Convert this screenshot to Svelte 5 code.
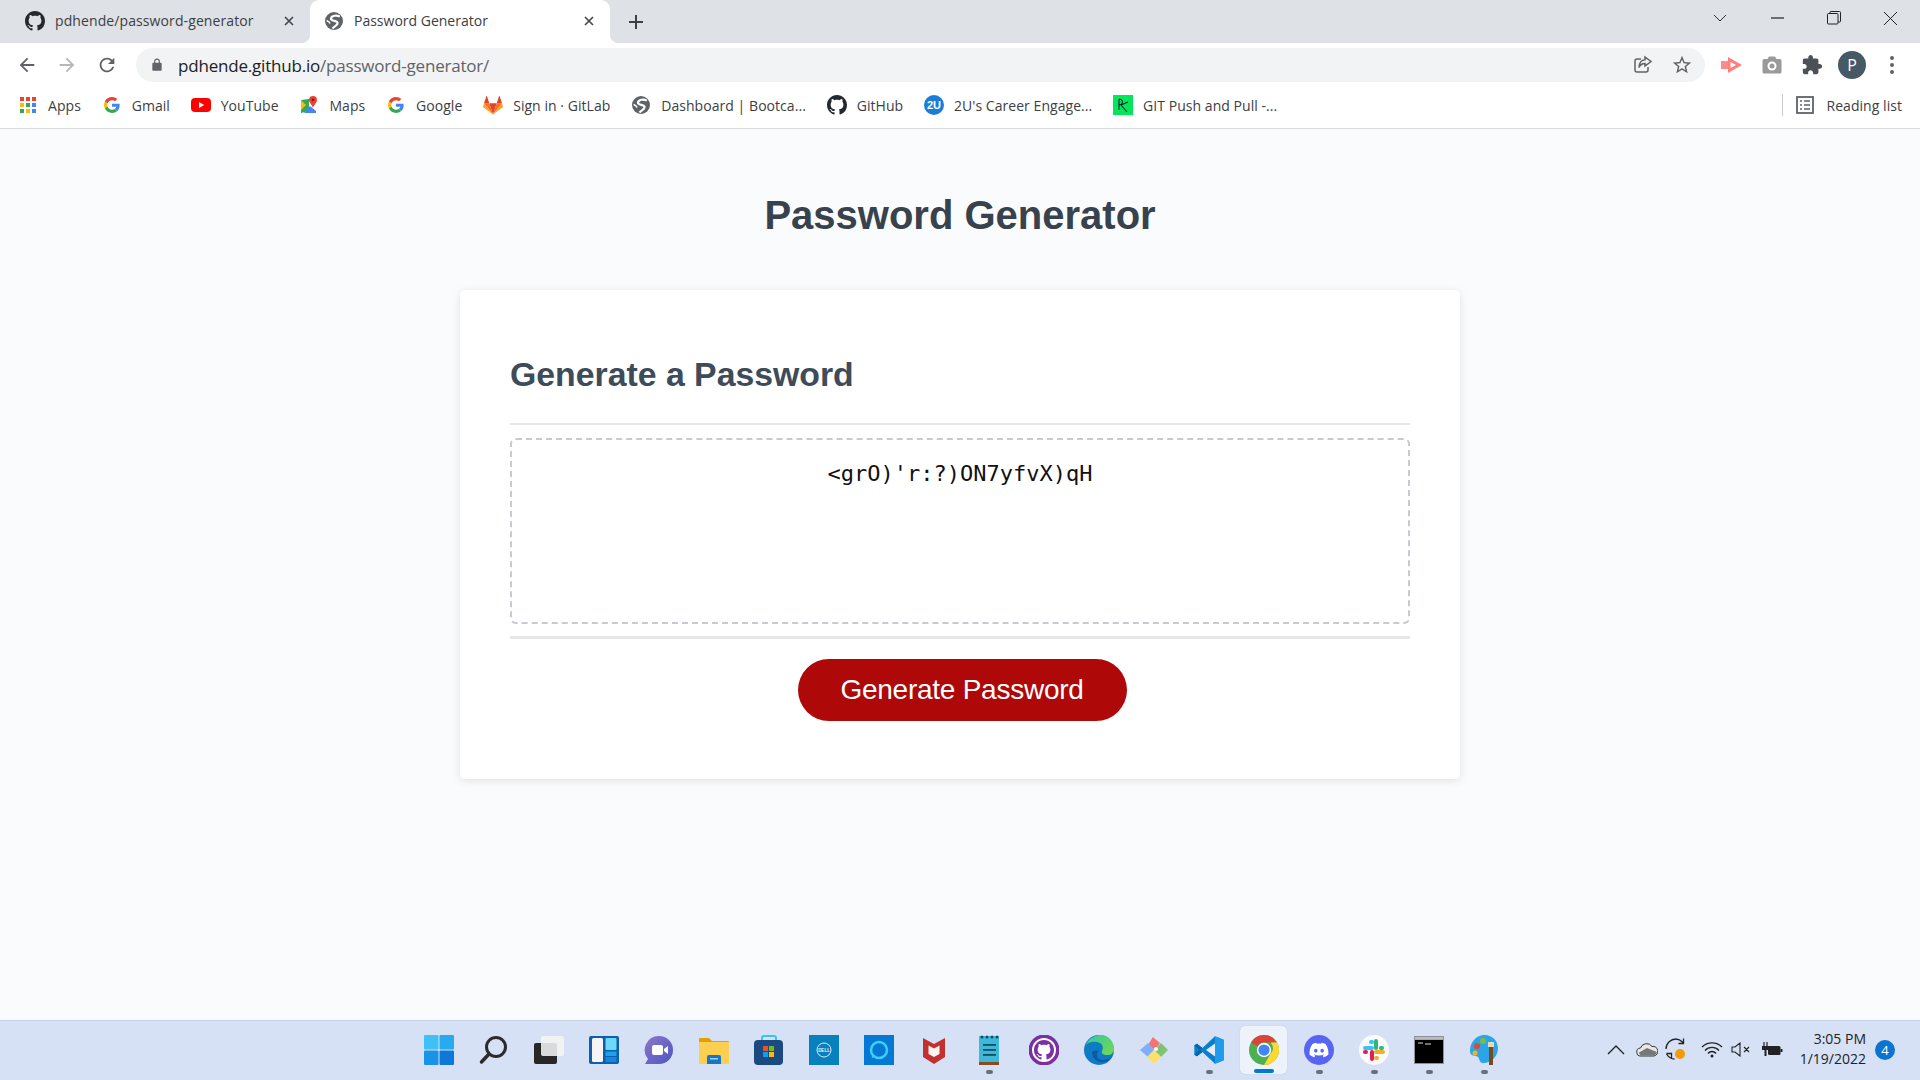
<script>
  const bookmarks = [
    { icon: 'apps', label: 'Apps' },
    { icon: 'google', label: 'Gmail' },
    { icon: 'youtube', label: 'YouTube' },
    { icon: 'maps', label: 'Maps' },
    { icon: 'google', label: 'Google' },
    { icon: 'gitlab', label: 'Sign in · GitLab' },
    { icon: 'globe', label: 'Dashboard | Bootca...' },
    { icon: 'github', label: 'GitHub' },
    { icon: 'twou', label: "2U's Career Engage..." },
    { icon: 'dk', label: 'GIT Push and Pull -...' }
  ];
  const appColors = ['#ea4335','#ea4335','#ea4335','#fbbc05','#34a853','#4285f4','#34a853','#fbbc05','#4285f4'];
  const taskIcons = [
    { id: 'win' }, { id: 'search' }, { id: 'desktops' }, { id: 'widgets' }, { id: 'chat' },
    { id: 'folder' }, { id: 'store' }, { id: 'dell' }, { id: 'alexa' }, { id: 'mcafee' },
    { id: 'notes', dot: true }, { id: 'ghd' }, { id: 'edge' }, { id: 'git' },
    { id: 'vscode', dot: true }, { id: 'chrome', active: true }, { id: 'discord', dot: true },
    { id: 'slack', dot: true }, { id: 'term', dot: true }, { id: 'paint', dot: true }
  ];
</script>

{#snippet github(size)}
  <svg width={size} height={size} viewBox="0 0 16 16"><path fill="#24292f" d="M8 0C3.58 0 0 3.58 0 8c0 3.54 2.29 6.53 5.47 7.59.4.07.55-.17.55-.38 0-.19-.01-.82-.01-1.49-2.01.37-2.53-.49-2.69-.94-.09-.23-.48-.94-.82-1.13-.28-.15-.68-.52-.01-.53.63-.01 1.08.58 1.23.82.72 1.21 1.87.87 2.33.66.07-.52.28-.87.51-1.07-1.78-.2-3.64-.89-3.64-3.95 0-.87.31-1.59.82-2.15-.08-.2-.36-1.02.08-2.12 0 0 .67-.21 2.2.82.64-.18 1.32-.27 2-.27.68 0 1.36.09 2 .27 1.53-1.04 2.2-.82 2.2-.82.44 1.1.16 1.92.08 2.12.51.56.82 1.27.82 2.15 0 3.07-1.87 3.75-3.65 3.95.29.25.54.73.54 1.48 0 1.07-.01 1.93-.01 2.2 0 .21.15.46.55.38A8.013 8.013 0 0016 8c0-4.42-3.58-8-8-8z"/></svg>
{/snippet}

{#snippet globe()}
  <svg width="18" height="18" viewBox="0 0 18 18"><circle cx="9" cy="9" r="9" fill="#5f6368"/><path fill="none" stroke="#fff" stroke-width="2.200" d="M14.800 4.600C11.500 2.800 6.500 3.600 6 6.500 5.500 9.800 12.300 8 12.600 11 12.800 13.500 9.500 14.200 7.500 16.500"/><path fill="none" stroke="#fff" stroke-width="1.600" d="M1.600 8.500C3 9 4.500 10 5 11.500"/></svg>
{/snippet}

{#snippet googleG()}
  <svg width="16" height="16" viewBox="0 0 48 48"><path fill="#EA4335" d="M24 9.5c3.54 0 6.71 1.22 9.21 3.6l6.85-6.85C35.9 2.38 30.47 0 24 0 14.62 0 6.51 5.38 2.56 13.22l7.98 6.19C12.43 13.72 17.74 9.5 24 9.5z"/><path fill="#4285F4" d="M46.98 24.55c0-1.57-.15-3.09-.38-4.55H24v9.02h12.94c-.58 2.96-2.26 5.48-4.78 7.18l7.73 6c4.51-4.18 7.09-10.36 7.09-17.65z"/><path fill="#FBBC05" d="M10.53 28.59c-.48-1.45-.76-2.99-.76-4.59s.27-3.14.76-4.59l-7.98-6.19C.92 16.46 0 20.12 0 24c0 3.88.92 7.54 2.56 10.78l7.97-6.19z"/><path fill="#34A853" d="M24 48c6.48 0 11.93-2.13 15.89-5.81l-7.73-6c-2.15 1.45-4.92 2.3-8.16 2.3-6.26 0-11.57-4.22-13.47-9.91l-7.98 6.19C6.51 42.62 14.62 48 24 48z"/></svg>
{/snippet}

{#snippet bookmarkIcon(name)}
  {#if name === 'apps'}
    <span class="apps">{#each appColors as c}<i style="background:{c}"></i>{/each}</span>
  {:else if name === 'google'}
    {@render googleG()}
  {:else if name === 'youtube'}
    <svg width="20" height="16" viewBox="0 0 20 16"><rect y="1" width="20" height="14" rx="4" fill="#f00"/><path d="M8 5l5.2 3L8 11z" fill="#fff"/></svg>
  {:else if name === 'maps'}
    <svg width="18" height="18" viewBox="0 0 18 18"><path fill="#35a853" d="M1 4l8-1v12l-8 2z"/><path fill="#fbbc05" d="M1 4l5 5-5 5z"/><path fill="#4285f4" d="M4 17l6-7 6 5v2z"/><path fill="#e8eaed" d="M9 3l7 1v5l-5 0z"/><path fill="#ea4335" d="M13 0a4 4 0 014 4c0 2.8-3 4.5-4 8-1-3.5-4-5.200-4-8a4 4 0 014-4z"/><circle cx="13" cy="4" r="1.400" fill="#8e1a14"/></svg>
  {:else if name === 'gitlab'}
    <svg width="20" height="19" viewBox="0 0 20 19"><path fill="#e24329" d="M10 18.500l3.700-11.300H6.300z"/><path fill="#fc6d26" d="M10 18.500L6.300 7.200H1z"/><path fill="#fca326" d="M1 7.200L0 10.500c-.1.300 0 .6.300.8L10 18.500z"/><path fill="#e24329" d="M1 7.200h5.300L4 .3c-.1-.4-.6-.4-.7 0z"/><path fill="#fc6d26" d="M10 18.500l3.700-11.300H19z"/><path fill="#fca326" d="M19 7.200l1 3.300c.1.300 0 .6-.3.8L10 18.500z"/><path fill="#e24329" d="M19 7.200h-5.300L16 .3c.1-.4.6-.4.700 0z"/></svg>
  {:else if name === 'globe'}
    {@render globe()}
  {:else if name === 'github'}
    {@render github(20)}
  {:else if name === 'twou'}
    <svg width="20" height="20" viewBox="0 0 20 20"><circle cx="10" cy="10" r="10" fill="#1b7ed6"/><text x="10" y="14" text-anchor="middle" font-family="Liberation Sans" font-weight="700" font-size="11" fill="#fff">2U</text></svg>
  {:else if name === 'dk'}
    <svg width="20" height="20" viewBox="0 0 20 20"><rect width="20" height="20" fill="#05e75a"/><path d="M6 4v11M6 4c3 0 4 2 3 5l-3 1M8 10l7-3M8 10l6 7" stroke="#123" stroke-width="1.100" fill="none"/></svg>
  {/if}
{/snippet}

{#snippet taskIcon(id)}
  {#if id === 'win'}
    <svg width="30" height="30" viewBox="0 0 30 30"><rect x="0" y="0" width="14.500" height="14.500" rx="1" fill="#3fc1f5"/><rect x="15.500" y="0" width="14.500" height="14.500" rx="1" fill="#28aaee"/><rect x="0" y="15.500" width="14.500" height="14.500" rx="1" fill="#1a93e6"/><rect x="15.500" y="15.500" width="14.500" height="14.500" rx="1" fill="#0e78d8"/></svg>
  {:else if id === 'search'}
    <svg width="30" height="30" viewBox="0 0 30 30"><circle cx="17" cy="12" r="9.500" fill="none" stroke="#2b2b2b" stroke-width="3"/><path d="M10 19l-7.500 8" stroke="#2b2b2b" stroke-width="3.500" stroke-linecap="round"/></svg>
  {:else if id === 'desktops'}
    <svg width="30" height="30" viewBox="0 0 30 30"><rect x="0" y="8" width="23" height="21" rx="2" fill="#272727"/><rect x="7" y="1" width="23" height="20" rx="2" fill="#f4f4f4" opacity=".88"/></svg>
  {:else if id === 'widgets'}
    <svg width="30" height="30" viewBox="0 0 30 30"><rect width="30" height="28" y="1" rx="2" fill="#0f5fa8"/><rect x="3" y="3" width="11" height="24" rx="1.500" fill="#f5f5f5"/><rect x="16.500" y="3" width="11" height="12" rx="1" fill="#6cd8fa"/><rect x="16.500" y="16.500" width="11" height="4.500" fill="#1fa0ee"/><rect x="16.500" y="22" width="11" height="5" fill="#1287e0"/></svg>
  {:else if id === 'chat'}
    <svg width="30" height="30" viewBox="0 0 30 30"><defs><linearGradient id="c1" x1="0" y1="0" x2="1" y2="1"><stop offset="0" stop-color="#8d78c8"/><stop offset="1" stop-color="#4c55c4"/></linearGradient></defs><path d="M15 1a14 14 0 110 28H1l3-5A14 14 0 0115 1z" fill="url(#c1)"/><rect x="8" y="10" width="11" height="10" rx="2" fill="#fff"/><path d="M20 14l4-3v8l-4-3z" fill="#fff"/></svg>
  {:else if id === 'folder'}
    <svg width="30" height="28" viewBox="0 0 30 28"><path d="M0 3a1 1 0 011-1h9l3 3h16a1 1 0 011 1v4H0z" fill="#e0a200"/><path d="M0 6h30v21a1 1 0 01-1 1H1a1 1 0 01-1-1z" fill="#fdcf50"/><path d="M8 28v-7a2 2 0 012-2h10a2 2 0 012 2v7z" fill="#1476c4"/><rect x="11" y="22" width="8" height="1.500" fill="#9fd2f3"/></svg>
  {:else if id === 'store'}
    <svg width="30" height="30" viewBox="0 0 30 30"><path d="M8 7V3a2 2 0 012-2h10a2 2 0 012 2v4" fill="none" stroke="#38c3f2" stroke-width="2"/><rect y="5" width="29" height="25" rx="4" fill="#1a4a80"/><rect x="9" y="11" width="5" height="5" fill="#f25022"/><rect x="15" y="11" width="5" height="5" fill="#7fba00"/><rect x="9" y="17" width="5" height="5" fill="#00a4ef"/><rect x="15" y="17" width="5" height="5" fill="#ffb900"/></svg>
  {:else if id === 'dell'}
    <svg width="30" height="30" viewBox="0 0 30 30"><rect width="30" height="30" fill="#0880bd"/><circle cx="15" cy="15" r="7" fill="none" stroke="#d8eef8" stroke-width="1"/><text x="15" y="17" text-anchor="middle" font-size="4.500" font-weight="700" font-family="Liberation Sans" fill="#e8f5fb">DELL</text></svg>
  {:else if id === 'alexa'}
    <svg width="30" height="30" viewBox="0 0 30 30"><rect width="30" height="30" fill="#0578d6"/><circle cx="15" cy="15" r="8" fill="none" stroke="#3fd0f5" stroke-width="2.500"/><path d="M9 19l-1.500 4 4.500-1.500z" fill="#3fd0f5"/></svg>
  {:else if id === 'mcafee'}
    <svg width="30" height="30" viewBox="0 0 30 30"><path d="M4 3l11 6 11-6v19l-11 7-11-7z" fill="#c4302f"/><path d="M9.500 10.500l5.500 3 5.500-3v8.500L15 22l-5.500-3z" fill="#fbf4f2"/></svg>
  {:else if id === 'notes'}
    <svg width="24" height="32" viewBox="0 0 24 32"><rect x="2" y="2" width="20" height="27" fill="#3db8d8"/><rect x="2" y="28" width="20" height="3" fill="#8a4b24"/><g fill="#114e66"><circle cx="5" cy="3" r="1.500"/><circle cx="10" cy="3" r="1.500"/><circle cx="15" cy="3" r="1.500"/><circle cx="20" cy="3" r="1.500"/><rect x="6" y="10" width="13" height="1.800"/><rect x="6" y="15" width="13" height="1.800"/><rect x="6" y="20" width="13" height="1.800"/></g></svg>
  {:else if id === 'ghd'}
    <svg width="30" height="30" viewBox="-4 -4 24 24"><circle cx="8" cy="8" r="11" fill="#fff" stroke="#7b2fa0" stroke-width="2.800"/><path fill="#7b2fa0" d="M8 0C3.58 0 0 3.58 0 8c0 3.54 2.29 6.53 5.470 7.590.4.070.55-.17.55-.38 0-.19-.01-.82-.01-1.490-2.010.37-2.530-.49-2.690-.94-.09-.23-.48-.94-.82-1.130-.28-.15-.68-.52-.01-.53.63-.01 1.080.58 1.230.82.720 1.210 1.870.87 2.330.66.070-.52.280-.87.510-1.070-1.780-.2-3.640-.89-3.640-3.950 0-.87.310-1.590.820-2.150-.08-.2-.36-1.020.080-2.120 0 0 .67-.21 2.200.82.640-.18 1.320-.27 2-.27.680 0 1.360.09 2 .27 1.530-1.040 2.200-.82 2.200-.82.44 1.100.16 1.920.08 2.120.51.56.82 1.270.82 2.150 0 3.070-1.870 3.750-3.650 3.950.29.25.54.73.54 1.480 0 1.070-.01 1.930-.01 2.200 0 .21.15.46.55.38A8.013 8.013 0 0016 8c0-4.420-3.580-8-8-8z"/></svg>
  {:else if id === 'edge'}
    <svg width="30" height="30" viewBox="0 0 30 30"><defs><linearGradient id="e1" x1="0" y1="0" x2="1" y2="1"><stop offset="0" stop-color="#36c9a0"/><stop offset="1" stop-color="#74d94f"/></linearGradient></defs><circle cx="15" cy="15" r="15" fill="#0f7bc4"/><path d="M2 10C5 2 13 0 17 0c7 0 13 6 13 14 0 5-4 6-7 6-4 0-6-2-5-4 1-2 2-5-2-8-4-2-11-2-14 2z" fill="url(#e1)"/><path d="M8 17c0 7 6 11 12 10 3 0 6-2 8-5-3 2-6 3-9 3-4 0-6-2-6-5 0-2 1-3 2-4-3-1-7 0-7 1z" fill="#0c5aa6"/></svg>
  {:else if id === 'git'}
    <svg width="30" height="30" viewBox="0 0 30 30"><path d="M15 2l6 7-6 6-6-6z" fill="#f27474" transform="rotate(-10 15 9)"/><path d="M1 15l8-7 6 7-6 7z" fill="#80aefb"/><path d="M15 15l7-7 7 7-7 7z" fill="#7cc46e"/><path d="M8 22l7-7 7 7-7 7z" fill="#fbe16c"/><circle cx="17" cy="14" r="2" fill="#fff"/></svg>
  {:else if id === 'vscode'}
    <svg width="30" height="30" viewBox="0 0 100 100"><path d="M70 4L99 16v68L70 96 28 57 10 71 1 66V34l9-5 18 14z" fill="#0b7fcc"/><path d="M70 4L99 16v68L70 96z" fill="#1e9bea"/><path d="M70 28v44L40 50z" fill="#e3ecf9"/><path d="M1 34l9-5 18 14-9 8zM1 66l9 5 18-14-9-8z" fill="#0865a8"/></svg>
  {:else if id === 'chrome'}
    <svg width="30" height="30" viewBox="0 0 48 48"><circle cx="24" cy="24" r="24" fill="#4caf50"/><path d="M24 0a24 24 0 0120.800 12H24a12 12 0 00-10.400 6L3.200 12A24 24 0 0124 0z" fill="#db4437"/><path d="M44.800 12A24 24 0 0124 48l10.400-18a12 12 0 000-18z" fill="#fdd835"/><circle cx="24" cy="24" r="11.500" fill="#fff"/><circle cx="24" cy="24" r="9" fill="#4285f4"/></svg>
  {:else if id === 'discord'}
    <svg width="30" height="30" viewBox="0 0 30 30"><circle cx="15" cy="15" r="15" fill="#5865f2"/><path transform="translate(5.500 5.500) scale(.79)" fill="#fff" d="M20.317 4.37a19.791 19.791 0 0 0-4.885-1.515.074.074 0 0 0-.079.037c-.21.375-.444.864-.608 1.25a18.27 18.27 0 0 0-5.487 0 12.64 12.64 0 0 0-.617-1.25.077.077 0 0 0-.079-.037A19.736 19.736 0 0 0 3.677 4.37a.07.07 0 0 0-.032.027C.533 9.046-.32 13.58.099 18.057a.082.082 0 0 0 .031.057 19.9 19.9 0 0 0 5.993 3.03.078.078 0 0 0 .084-.028c.462-.63.874-1.295 1.226-1.994a.076.076 0 0 0-.041-.106 13.107 13.107 0 0 1-1.872-.892.077.077 0 0 1-.008-.128 10.2 10.2 0 0 0 .372-.292.074.074 0 0 1 .077-.01c3.928 1.793 8.18 1.793 12.062 0a.074.074 0 0 1 .078.01c.12.098.246.198.373.292a.077.077 0 0 1-.006.127 12.299 12.299 0 0 1-1.873.892.077.077 0 0 0-.041.107c.36.698.772 1.362 1.225 1.993a.076.076 0 0 0 .084.028 19.839 19.839 0 0 0 6.002-3.03.077.077 0 0 0 .032-.054c.5-5.177-.838-9.674-3.549-13.66a.061.061 0 0 0-.031-.03zM8.02 15.33c-1.183 0-2.157-1.085-2.157-2.419 0-1.333.956-2.419 2.157-2.419 1.21 0 2.176 1.096 2.157 2.42 0 1.333-.956 2.418-2.157 2.418zm7.975 0c-1.183 0-2.157-1.085-2.157-2.419 0-1.333.955-2.419 2.157-2.419 1.21 0 2.176 1.096 2.157 2.42 0 1.333-.946 2.418-2.157 2.418z"/></svg>
  {:else if id === 'slack'}
    <svg width="30" height="30" viewBox="0 0 30 30"><circle cx="15" cy="15" r="15" fill="#fbfbfb"/><g stroke-width="4" stroke-linecap="round"><path d="M17 6v7M17 13h.01" stroke="#2eb67d"/><path d="M22 13h1" stroke="#2eb67d"/><path d="M6 13h7" stroke="#36c5f0"/><path d="M12 7h1" stroke="#36c5f0"/><path d="M13 17v7" stroke="#e01e5a"/><path d="M6 17h1" stroke="#e01e5a"/><path d="M17 17h7" stroke="#ecb22e"/><path d="M17 23h1" stroke="#ecb22e"/></g></svg>
  {:else if id === 'term'}
    <svg width="30" height="28" viewBox="0 0 30 28"><rect width="30" height="28" fill="#8e9297"/><rect x="1" y="4" width="28" height="23" fill="#000"/><rect x="1" y="1" width="28" height="2.500" fill="#b9bcc0"/><path d="M4 7h5M11 8h6" stroke="#ddd" stroke-width="1"/></svg>
  {:else if id === 'paint'}
    <svg width="30" height="32" viewBox="0 0 30 32"><path d="M14 1c9-1 15 6 15 13s-5 14-13 15c-6 1-5-4-7-6s-8 0-8-6C1 9 6 2 14 1z" fill="#2aa6e8"/><circle cx="8" cy="12" r="3" fill="#e5472d"/><circle cx="14" cy="7" r="3" fill="#7abf3a"/><circle cx="6" cy="19" r="2.500" fill="#f4b429"/><rect x="20" y="12" width="4" height="19" fill="#7a4a1f"/><rect x="19" y="8" width="6" height="5" fill="#e8d9b5"/></svg>
  {/if}
{/snippet}

<div class="screen">
  <header class="browser">
    <div class="tabstrip">
      <div class="tab">
        <span class="favicon">{@render github(20)}</span>
        <span class="tab-title">pdhende/password-generator</span>
        <svg class="tab-x" width="10" height="10" viewBox="0 0 10 10"><path d="M1 1l8 8M9 1l-8 8" stroke="#45494f" stroke-width="1.700"/></svg>
      </div>
      <div class="tab active">
        <span class="favicon">{@render globe()}</span>
        <span class="tab-title">Password Generator</span>
        <svg class="tab-x" width="10" height="10" viewBox="0 0 10 10"><path d="M1 1l8 8M9 1l-8 8" stroke="#45494f" stroke-width="1.700"/></svg>
      </div>
      <svg class="plus" width="14" height="14" viewBox="0 0 14 14"><path d="M7 0v14M0 7h14" stroke="#3c4043" stroke-width="2"/></svg>
      <div class="winctl">
        <svg class="chev" width="14" height="8" viewBox="0 0 14 8"><path d="M1 1l6 6 6-6" fill="none" stroke="#333" stroke-width="1"/></svg>
        <svg width="14" height="2" viewBox="0 0 14 2"><path d="M0 1h13" stroke="#222" stroke-width="1.200"/></svg>
        <svg width="14" height="14" viewBox="0 0 14 14"><rect x=".5" y="2.500" width="10.500" height="10.500" rx="1" fill="none" stroke="#222"/><path d="M3 2.500V1.500a1 1 0 011-1h8.500a1 1 0 011 1V10a1 1 0 01-1 1H11" fill="none" stroke="#222"/></svg>
        <svg width="15" height="15" viewBox="0 0 15 15"><path d="M1 1l13 13M14 1L1 14" stroke="#222" stroke-width="1"/></svg>
      </div>
    </div>

    <div class="toolbar">
      <svg class="nav" width="22" height="22" viewBox="0 0 24 24"><path fill="#5f6368" d="M20 11H7.830l5.590-5.590L12 4l-8 8 8 8 1.410-1.410L7.830 13H20v-2z"/></svg>
      <svg class="nav" width="22" height="22" viewBox="0 0 24 24"><path fill="#b4b7bb" d="M4 11h12.170l-5.590-5.590L12 4l8 8-8 8-1.410-1.410L16.170 13H4v-2z"/></svg>
      <svg class="nav" width="22" height="22" viewBox="0 0 24 24"><path fill="#5f6368" d="M17.650 6.350C16.200 4.900 14.210 4 12 4c-4.420 0-7.990 3.580-7.990 8s3.570 8 7.990 8c3.730 0 6.840-2.550 7.730-6h-2.080c-.82 2.330-3.040 4-5.650 4-3.310 0-6-2.690-6-6s2.690-6 6-6c1.660 0 3.140.69 4.220 1.780L13 11h7V4l-2.350 2.350z"/></svg>
      <div class="omnibox">
        <svg width="14" height="14" viewBox="0 0 24 24"><path fill="#5f6368" d="M18 8h-1V6c0-2.760-2.240-5-5-5S7 3.240 7 6v2H6c-1.100 0-2 .9-2 2v10c0 1.100.9 2 2 2h12c1.100 0 2-.9 2-2V10c0-1.100-.9-2-2-2zM9 8V6c0-1.660 1.340-3 3-3s3 1.340 3 3v2H9z"/></svg>
        <span class="url"><b>pdhende.github.io</b>/password-generator/</span>
        <span class="omni-actions">
          <svg width="20" height="20" viewBox="0 0 20 20" fill="none" stroke="#5f6368" stroke-width="1.500"><path d="M8 4H4a2 2 0 00-2 2v9a2 2 0 002 2h9a2 2 0 002-2v-3"/><path d="M12 2l6 4.500-6 4.500V8.500C9 8.500 7 10 6 12.500 6 8 8.500 5 12 4.700z"/></svg>
          <svg width="22" height="22" viewBox="0 0 24 24"><path fill="#5f6368" d="M22 9.240l-7.190-.62L12 2 9.190 8.630 2 9.240l5.460 4.730L5.820 21 12 17.270 18.180 21l-1.630-7.030L22 9.240zM12 15.400l-3.760 2.270 1-4.280-3.320-2.880 4.380-.38L12 6.100l1.710 4.040 4.380.38-3.320 2.880 1 4.280L12 15.400z"/></svg>
        </span>
      </div>
      <div class="tools">
        <svg width="24" height="18" viewBox="0 0 24 18"><rect x="1" y="5" width="7" height="8" fill="#ff8a8a"/><path d="M8 1l14 8-14 8z" fill="#ff7f7f"/><path d="M10.500 6l5.500 3-5.500 3z" fill="#fff"/></svg>
        <svg width="20" height="18" viewBox="0 0 20 18"><path d="M2 3h3.500l1.500-2.500h6L14.500 3H18a1.500 1.500 0 011.500 1.500V16a1.500 1.500 0 01-1.500 1.500H2A1.500 1.500 0 01.5 16V4.500A1.500 1.500 0 012 3z" fill="#9a9a9a"/><circle cx="10" cy="10" r="4.500" fill="#fff"/><circle cx="10" cy="10" r="2.500" fill="#9a9a9a"/></svg>
        <svg width="22" height="22" viewBox="0 0 24 24"><path fill="#4b5156" d="M20.500 11H19V7c0-1.100-.9-2-2-2h-4V3.500C13 2.120 11.880 1 10.500 1S8 2.120 8 3.500V5H4c-1.100 0-1.990.9-1.990 2v3.800H3.500c1.490 0 2.700 1.210 2.700 2.700s-1.210 2.700-2.700 2.700H2V20c0 1.100.9 2 2 2h3.800v-1.500c0-1.490 1.210-2.700 2.700-2.700 1.490 0 2.700 1.210 2.700 2.700V22H17c1.100 0 2-.9 2-2v-4h1.500c1.380 0 2.500-1.120 2.500-2.500S21.880 11 20.500 11z"/></svg>
        <span class="avatar">P</span>
        <svg width="6" height="20" viewBox="0 0 6 20"><g fill="#5f6368"><circle cx="3" cy="3" r="2"/><circle cx="3" cy="10" r="2"/><circle cx="3" cy="17" r="2"/></g></svg>
      </div>
    </div>

    <nav class="bookmarks">
      {#each bookmarks as b}
        <span class="bm">
          <span class="bm-icon">{@render bookmarkIcon(b.icon)}</span>
          <span>{b.label}</span>
        </span>
      {/each}
      <span class="reading">
        <svg width="18" height="18" viewBox="0 0 18 18" fill="none" stroke="#5f6368"><rect x="1" y="1" width="16" height="16" stroke-width="1.800"/><path d="M4 5h2M8 5h6M4 9h2M8 9h6M4 13h2M8 13h6" stroke-width="1.500"/></svg>
        <span>Reading list</span>
      </span>
    </nav>
  </header>

  <main class="page">
    <h1>Password Generator</h1>
    <section class="card">
      <h2>Generate a Password</h2>
      <div class="body">
        <div class="password">&lt;grO)'r:?)ON7yfvX)qH</div>
      </div>
      <div class="foot">
        <button>Generate Password</button>
      </div>
    </section>
  </main>

  <footer class="taskbar">
    <div></div>
    <div class="apps-row">
      {#each taskIcons as t}
        <div class="cell" class:active={t.active}>
          {@render taskIcon(t.id)}
          {#if t.dot}<span class="dot"></span>{/if}
          {#if t.active}<span class="bar"></span>{/if}
        </div>
      {/each}
    </div>
    <div class="tray">
      <svg width="18" height="10" viewBox="0 0 18 10"><path d="M1 9l8-8 8 8" fill="none" stroke="#222" stroke-width="1.300"/></svg>
      <svg width="22" height="15" viewBox="0 0 22 15"><path d="M5 14a4 4 0 01-.5-8A6.500 6.500 0 0116 4.500a4.800 4.800 0 012 9.500z" fill="#e8e8e8" stroke="#333"/><path d="M5 13.500h13a4 4 0 002.800-3.500L11 6 3 10.500c.3 1.500 1 2.500 2 3z" fill="#777"/></svg>
      <svg width="22" height="24" viewBox="0 0 22 24" fill="none" stroke="#222" stroke-width="1.300"><path d="M1 11C1 5 6 1 11 1c3 0 5 1.500 7 3.500M18.500 .5v5h-5"/><path d="M1.500 15.500h5v5M1.500 16c2 3 5 5 8 5"/><circle cx="15" cy="16" r="5" fill="#f59a00" stroke="none"/></svg>
      <svg width="22" height="17" viewBox="0 0 22 17" fill="none" stroke="#222" stroke-width="1.300"><path d="M1 6a14 14 0 0120 0M4 9.500a9.500 9.500 0 0114 0M7 12.500a5 5 0 018 0"/><circle cx="11" cy="15" r="1.500" fill="#222" stroke="none"/></svg>
      <svg width="20" height="15" viewBox="0 0 20 15" fill="none" stroke="#222" stroke-width="1.100"><path d="M1 5h3l5-4v13l-5-4H1zM13 5l5 5M18 5l-5 5"/></svg>
      <svg width="22" height="16" viewBox="0 0 22 16"><path d="M3 0v4M6 0v4" stroke="#222" stroke-width="1.200"/><path d="M1 4h7v4H1zM3.500 8h2v6h-2z" fill="#222"/><rect x="7" y="4" width="12.500" height="9" rx="1.500" fill="#222"/><rect x="19.500" y="7" width="2" height="3" fill="#222"/></svg>
      <div class="clock"><span>3:05 PM</span><span>1/19/2022</span></div>
      <span class="badge">4</span>
    </div>
  </footer>
</div>

<style>
  :global(body) { margin: 0; }
  .screen { width: 1920px; height: 1080px; display: flex; flex-direction: column; overflow: hidden; font-family: "Open Sans", "Noto Sans", sans-serif; background: #fafbfc; }

  .browser { flex: none; background: #fff; }
  .tabstrip { height: 43px; background: #dee1e6; display: flex; align-items: stretch; padding-left: 10px; }
  .tab { width: 300px; display: flex; align-items: center; padding: 0 16px 2px 15px; box-sizing: border-box; font-size: 14px; color: #3c4043; position: relative; }
  .tab:first-child .tab-title { letter-spacing: .1px; }
  .tab.active { background: #fff; border-radius: 9px 9px 0 0; color: #3c4043; }
  .tab.active::before, .tab.active::after { content: ""; position: absolute; bottom: 0; width: 9px; height: 9px; }
  .tab.active::before { left: -9px; background: radial-gradient(circle at 0 0, transparent 9px, #fff 9.500px); }
  .tab.active::after { right: -9px; background: radial-gradient(circle at 100% 0, transparent 9px, #fff 9.500px); }
  .favicon { width: 20px; height: 20px; margin-right: 10px; display: flex; align-items: center; }
  .tab.active .favicon { margin-right: 9px; }
  .tab-title { flex: 1; white-space: nowrap; }
  .tab-x { flex: none; }
  .plus { align-self: center; margin-left: 19px; }
  .winctl { margin-left: auto; display: flex; align-items: center; height: 36px; gap: 42px; padding-right: 22px; }
  .chev { margin-right: 2px; }

  .toolbar { height: 43px; display: flex; align-items: center; padding: 1px 0 0 16px; box-sizing: border-box; position: relative; }
  .nav { margin-right: 18px; flex: none; }
  .omnibox { width: 1569px; height: 34px; border-radius: 17px; background: #f1f3f4; display: flex; align-items: center; padding-left: 14px; box-sizing: border-box; }
  .url { margin-left: 14px; font-size: 17px; color: #5f6368; letter-spacing: -.2px; white-space: nowrap; }
  .url b { font-weight: 400; color: #202124; }
  .omni-actions { margin-left: auto; display: flex; align-items: center; gap: 18px; padding-right: 12px; }
  .tools { display: grid; grid-auto-flow: column; grid-auto-columns: 40px; justify-items: center; align-items: center; margin-left: 7px; }
  .avatar { width: 28px; height: 28px; border-radius: 50%; background: #455a64; color: #fff; font-size: 16px; display: flex; align-items: center; justify-content: center; }

  .bookmarks { display: flex; align-items: center; padding: 0 0 4px 20px; border-bottom: 1px solid #dadce0; box-sizing: border-box; height: 43px; font-size: 14px; letter-spacing: .05px; color: #3c4043; white-space: nowrap; gap: 22.800px; }
  .bm { display: flex; align-items: center; gap: 12px; }
  .bm-icon { display: flex; align-items: center; justify-content: center; width: 16px; }
  .bm-icon > :global(svg) { flex: none; }
  .apps { width: 16px; height: 16px; flex: none; display: grid; grid-template-columns: repeat(3, 4px); gap: 2px; }
  .apps i { display: block; width: 4px; height: 4px; }
  .reading { margin-left: auto; display: flex; align-items: center; gap: 12px; border-left: 1px solid #c8cacd; height: 22px; padding: 0 18px 0 13px; }

  .page { flex: 1; display: flex; flex-direction: column; align-items: center; min-height: 0; }
  h1 { margin: 63px 0 0; height: 46px; font: 700 40px/46px "Liberation Sans", sans-serif; color: #37424d; }
  .card { margin-top: 52px; width: 1000px; height: 489px; box-sizing: border-box; background: #fff; border-radius: 5px; padding: 0 50px; box-shadow: 0 2px 8px rgba(0,0,0,.1); }
  h2 { margin: 0; height: 135px; padding-top: 65px; box-sizing: border-box; font: 700 33.800px/39px "Liberation Sans", sans-serif; color: #3e4b58; border-bottom: 2px solid #e6e7e9; }
  .body { height: 214px; padding-top: 13px; box-sizing: border-box; border-bottom: 3px solid #e6e7e9; }
  .password { height: 186px; box-sizing: border-box; border: 2px dashed #c5cbd1; border-radius: 6px; padding-top: 21px; text-align: center; font: 22px/26px "DejaVu Sans Mono", monospace; color: #111; }
  .foot { display: flex; justify-content: center; padding: 20px 0 0 4px; }
  button { width: 329px; height: 62px; border: 0; border-radius: 31px; background: #ae0808; color: #fff; font: 28px "Liberation Sans", sans-serif; letter-spacing: -.25px; padding: 0; }

  .taskbar { flex: none; height: 60px; background: #d6e1f6; border-top: 1px solid #c9d3e6; box-sizing: border-box; display: grid; grid-template-columns: 1fr auto 1fr; align-items: center; padding-bottom: 2px; }
  .apps-row { display: flex; margin-left: 2px; }
  .cell { width: 55px; height: 48px; display: flex; align-items: center; justify-content: center; position: relative; }
  .cell > :global(svg) { position: relative; }
  .cell.active::before { content: ""; position: absolute; inset: 0 4px; border-radius: 5px; background: #eef2fb; box-shadow: 0 0 1px rgba(0,0,0,.2); }
  .dot { position: absolute; bottom: 0; left: 50%; width: 7px; height: 4px; margin-left: -3px; border-radius: 2px; background: #6b7078; }
  .bar { position: absolute; bottom: 1px; left: 50%; width: 20px; height: 4px; margin-left: -10px; border-radius: 2px; background: #0078d4; }
  .tray { display: flex; align-items: center; justify-content: flex-end; padding-right: 25px; }
  .tray > svg:nth-child(2) { margin-left: 11px; }
  .tray > svg:nth-child(3) { margin-left: 7px; }
  .tray > svg:nth-child(4) { margin-left: 14px; }
  .tray > svg:nth-child(5) { margin-left: 8px; }
  .tray > svg:nth-child(6) { margin-left: 10px; }
  .clock { display: flex; flex-direction: column; align-items: flex-end; font: 14px/20px "Open Sans", sans-serif; color: #222; margin-left: 17px; margin-top: -1px; }
  .badge { width: 20px; height: 20px; border-radius: 50%; background: #0a74d0; color: #fff; font: 13px/20px "Open Sans", sans-serif; text-align: center; margin-left: 9px; }
</style>
